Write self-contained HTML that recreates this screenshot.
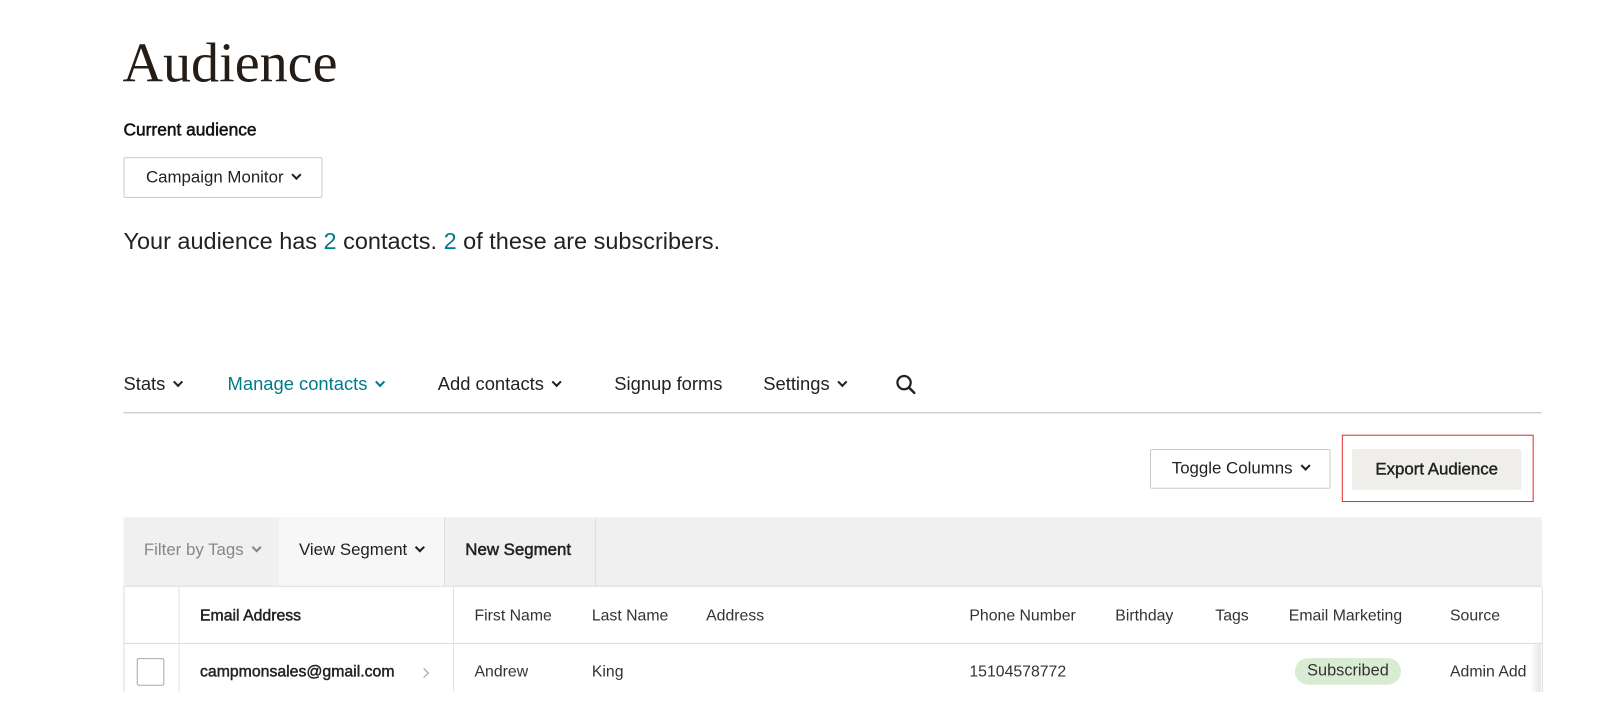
<!DOCTYPE html>
<html><head><meta charset="utf-8"><style>
html,body{margin:0;padding:0;background:#fff;width:1600px;height:712px;overflow:hidden}
#w{position:absolute;left:0;top:0;width:1568px;height:698px;transform:scale(1.0204);transform-origin:0 0;font-family:"Liberation Sans",sans-serif;color:#241c15}
.a{position:absolute;white-space:nowrap}
.chev{display:inline-block;width:5px;height:5px;border-right:2.2px solid currentColor;border-bottom:2.2px solid currentColor;transform:rotate(45deg);margin-left:9px;position:relative;top:-4px}
.sm{}
.th{position:absolute;top:595px;font-size:15.5px;color:#333}
</style></head><body><div id="w">
<div class="a" style="left:120px;top:30px;font-family:'Liberation Serif',serif;font-size:55px;color:#241c15">Audience</div>
<div class="a" style="left:121px;top:118px;font-size:17px;color:#111;-webkit-text-stroke:0.5px #111">Current audience</div>
<div class="a" style="left:121px;top:154px;width:193px;height:38px;border:1px solid #ccc;border-radius:2px;font-size:16.5px;line-height:38px;text-align:center;color:#222">Campaign Monitor<span class="chev sm"></span></div>
<div class="a" style="left:121px;top:223px;font-size:23px;color:#222">Your audience has <span style="color:#007c89">2</span> contacts. <span style="color:#007c89">2</span> of these are subscribers.</div>
<div class="a" style="left:121px;top:366px;font-size:18px;color:#222">Stats<span class="chev sm"></span></div>
<div class="a" style="left:223px;top:366px;font-size:18px;color:#007c89">Manage contacts<span class="chev sm"></span></div>
<div class="a" style="left:429px;top:366px;font-size:18px;color:#222">Add contacts<span class="chev sm"></span></div>
<div class="a" style="left:602px;top:366px;font-size:18px;color:#222">Signup forms</div>
<div class="a" style="left:748px;top:366px;font-size:18px;color:#222">Settings<span class="chev sm"></span></div>
<svg class="a" style="left:877px;top:366px" width="22" height="22" viewBox="0 0 22 22"><circle cx="9" cy="9" r="6.5" fill="none" stroke="#222" stroke-width="2.2"/><path d="M14 14l5 5" stroke="#222" stroke-width="2.4" stroke-linecap="round"/></svg>
<div class="a" style="left:121px;top:404px;width:1390px;height:1px;background:#bbb"></div>
<div class="a" style="left:1127px;top:440px;width:175px;height:37px;border:1px solid #ccc;border-radius:2px;font-size:16.5px;line-height:37px;text-align:center;color:#222">Toggle Columns<span class="chev sm"></span></div>
<div class="a" style="left:1315px;top:426px;width:186px;height:64px;border:1.5px solid #e03030"></div>
<div class="a" style="left:1325px;top:440px;width:166px;height:40px;background:#efeeea;border-radius:2px;font-size:16.5px;line-height:40px;text-align:center;color:#222;-webkit-text-stroke:0.4px #222">Export Audience</div>
<div class="a" style="left:121px;top:507px;width:1390px;height:67px;background:#f0f0f0;border-bottom:1px solid #ddd"></div>
<div class="a" style="left:273px;top:507px;width:162px;height:67px;background:#f7f7f7"></div>
<div class="a" style="left:435px;top:507px;width:147px;height:67px;border-left:1px solid #ddd;border-right:1px solid #ddd"></div>
<div class="a" style="left:141px;top:530px;font-size:16.5px;color:#888">Filter by Tags<span class="chev sm"></span></div>
<div class="a" style="left:293px;top:530px;font-size:16.5px;color:#222">View Segment<span class="chev sm"></span></div>
<div class="a" style="left:456px;top:530px;font-size:16.5px;color:#222;-webkit-text-stroke:0.5px #222">New Segment</div>
<div class="a" style="left:121px;top:575px;width:1389px;height:103px;border-left:1px solid #ddd;border-right:1px solid #ddd"></div>
<div class="a" style="left:121px;top:630px;width:1390px;height:1px;background:#ddd"></div>
<div class="a" style="left:175px;top:575px;width:1px;height:103px;background:#e3e3e3"></div>
<div class="a" style="left:444px;top:575px;width:1px;height:103px;background:#e3e3e3"></div>
<div class="th" style="left:196px;color:#222;-webkit-text-stroke:0.45px #222">Email Address</div>
<div class="th" style="left:465px">First Name</div>
<div class="th" style="left:580px">Last Name</div>
<div class="th" style="left:692px">Address</div>
<div class="th" style="left:950px">Phone Number</div>
<div class="th" style="left:1093px">Birthday</div>
<div class="th" style="left:1191px">Tags</div>
<div class="th" style="left:1263px">Email Marketing</div>
<div class="th" style="left:1421px">Source</div>
<div class="a" style="left:134px;top:645px;width:25px;height:25px;border:1px solid #aaa;border-radius:2px"></div>
<div class="th" style="top:650px;left:196px;color:#222;-webkit-text-stroke:0.45px #222">campmonsales@gmail.com</div>
<div class="a" style="left:412px;top:656px;width:6px;height:6px;border-right:1.5px solid #999;border-top:1.5px solid #999;transform:rotate(45deg)"></div>
<div class="th" style="top:650px;left:465px">Andrew</div>
<div class="th" style="top:650px;left:580px">King</div>
<div class="th" style="top:650px;left:950px">15104578772</div>
<div class="a" style="left:1269px;top:645px;width:104px;height:26px;border-radius:13px;background:#d8ecd3;font-size:16px;line-height:26px;text-align:center;color:#333">Subscribed</div>
<div class="th" style="top:650px;left:1421px">Admin Add</div>
<div class="a" style="left:1500px;top:631px;width:10px;height:47px;background:linear-gradient(90deg,#fff,#e6e6e6)"></div>
</div></body></html>
